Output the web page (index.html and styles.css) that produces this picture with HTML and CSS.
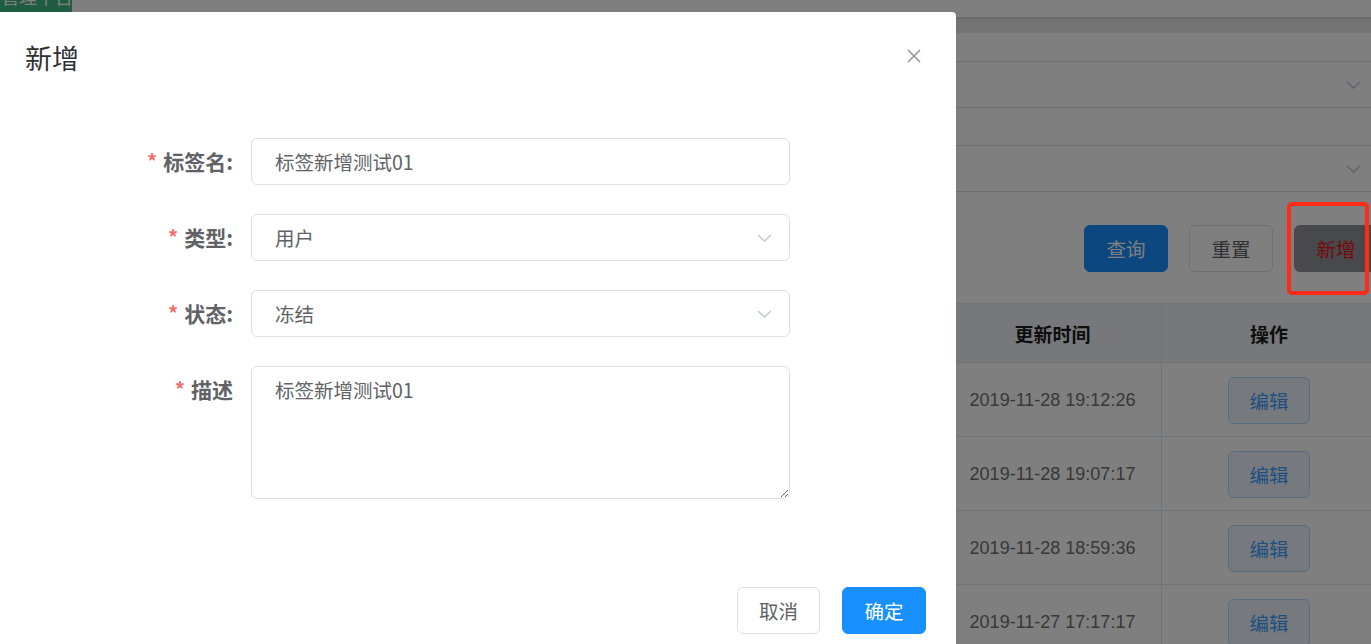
FILE: index.html
```html
<!DOCTYPE html>
<html lang="zh-CN">
<head>
<meta charset="utf-8">
<title>标签管理 - 新增</title>
<link rel="stylesheet" href="styles.css">
</head>
<body>
<div class="page">
  <div class="topbar">
    <div class="logo"><span class="logo-text">管理平台</span></div>
    <div class="navbar"></div>
  </div>
  <div class="tags"></div>
  <div class="content">
    <div class="filters">
      <div class="bg-select">
        <svg class="chev" width="15" height="8" viewBox="0 0 15 8"><path d="M1 1 L7.5 7 L14 1" fill="none" stroke="#c0c4cc" stroke-width="1.3"/></svg>
      </div>
      <div class="bg-select">
        <svg class="chev" width="15" height="8" viewBox="0 0 15 8"><path d="M1 1 L7.5 7 L14 1" fill="none" stroke="#c0c4cc" stroke-width="1.3"/></svg>
      </div>
      <div class="actions">
        <button class="btn btn-primary">查询</button>
        <button class="btn btn-default">重置</button>
        <button class="btn btn-info">新增</button>
      </div>
      <table class="grid">
        <colgroup><col class="c1"><col class="c2"><col class="c3"><col class="c4"></colgroup>
        <thead>
          <tr><th>状态</th><th>描述</th><th>更新时间</th><th>操作</th></tr>
        </thead>
        <tbody>
          <tr><td>正常</td><td>测试</td><td>2019-11-28 19:12:26</td><td><button class="edit">编辑</button></td></tr>
          <tr><td>正常</td><td>测试</td><td>2019-11-28 19:07:17</td><td><button class="edit">编辑</button></td></tr>
          <tr><td>冻结</td><td>测试</td><td>2019-11-28 18:59:36</td><td><button class="edit">编辑</button></td></tr>
          <tr><td>正常</td><td>测试</td><td>2019-11-27 17:17:17</td><td><button class="edit">编辑</button></td></tr>
        </tbody>
      </table>
    </div>
  </div>
</div>

<div class="mask"></div>

<div class="dialog">
  <div class="dialog-header">
    <span class="dialog-title">新增</span>
    <button class="dialog-close" aria-label="关闭">
      <svg width="14" height="14" viewBox="0 0 14 14"><path d="M1 1 L13 13 M13 1 L1 13" stroke="#909399" stroke-width="1.5" fill="none"/></svg>
    </button>
  </div>
  <div class="dialog-body">
    <div class="form">
      <div class="form-item">
        <label class="form-label"><span class="req">*</span>标签名:</label>
        <input class="input" value="标签新增测试01">
      </div>
      <div class="form-item">
        <label class="form-label"><span class="req">*</span>类型:</label>
        <div class="select">
          <span class="select-text">用户</span>
          <svg width="15" height="8" viewBox="0 0 15 8"><path d="M1 1 L7.5 7 L14 1" fill="none" stroke="#c0c4cc" stroke-width="1.3"/></svg>
        </div>
      </div>
      <div class="form-item">
        <label class="form-label"><span class="req">*</span>状态:</label>
        <div class="select">
          <span class="select-text">冻结</span>
          <svg width="15" height="8" viewBox="0 0 15 8"><path d="M1 1 L7.5 7 L14 1" fill="none" stroke="#c0c4cc" stroke-width="1.3"/></svg>
        </div>
      </div>
      <div class="form-item form-item-last">
        <label class="form-label"><span class="req">*</span>描述</label>
        <textarea class="textarea">标签新增测试01</textarea>
      </div>
    </div>
  </div>
  <div class="dialog-footer">
    <button class="dbtn dbtn-cancel">取消</button>
    <button class="dbtn dbtn-ok">确定</button>
  </div>
</div>

<div class="highlight"></div>
</body>
</html>
```
FILE: styles.css
```css
* { box-sizing: border-box; }
html, body { margin: 0; padding: 0; }
body {
  width: 1371px;
  height: 644px;
  overflow: hidden;
  position: relative;
  background: #fff;
  font-family: "Noto Sans CJK SC", "Liberation Sans", sans-serif;
  color: #606266;
}

/* ---------- underlying page ---------- */
.page { width: 1378px; }
.topbar { display: flex; height: 17px; }
.logo { width: 72px; height: 17px; background: #41b883; overflow: hidden; }
.logo-text {
  display: block;
  color: #fff;
  font-size: 18px;
  line-height: 18px;
  margin-top: -13px;
  padding-left: 1px;
  white-space: nowrap;
}
.navbar { flex: 1; background: #fff; }
.tags {
  height: 16px;
  background: #e6e6e6;
  box-shadow: inset 0 2px 2px rgba(0, 0, 0, 0.08);
}
.content { padding-top: 28px; }
.filters { margin-left: 600px; display: flex; flex-direction: column; }
.bg-select {
  height: 47px;
  border: 1px solid #dcdfe6;
  border-right: 0;
  display: flex;
  align-items: center;
  justify-content: flex-end;
  padding-right: 17px;
}
.bg-select + .bg-select { margin-top: 37px; }
.actions {
  margin-top: 33px;
  display: flex;
  justify-content: flex-end;
  gap: 21px;
}
.btn {
  width: 84px;
  height: 47px;
  border-radius: 6px;
  border: 1px solid transparent;
  padding: 0;
  font-family: "Noto Sans CJK SC", sans-serif;
  font-size: 19.5px;
}
.btn-primary { background: #1890ff; border-color: #1890ff; color: #fff; }
.btn-default { background: #fff; border-color: #dcdfe6; color: #606266; }
.btn-info { background: #909399; border-color: #909399; color: #e81414; }

.grid {
  margin-top: 31px;
  width: 776px;
  border-collapse: collapse;
  table-layout: fixed;
}
.grid .c1 { width: 128px; }
.grid .c2 { width: 215px; }
.grid .c3 { width: 218px; }
.grid .c4 { width: 215px; }
.grid th, .grid td {
  border: 1px solid #dfe6ec;
  text-align: center;
  padding: 0;
}
.grid th {
  height: 59px;
  background: #eef1f6;
  color: #1c1c1c;
  font-weight: bold;
  font-size: 19px;
}
.grid td {
  height: 74px;
  padding-top: 2px;
  font-family: "Liberation Sans", "Noto Sans CJK SC", sans-serif;
  font-size: 18px;
  color: #707070;
}
.edit {
  width: 82px;
  height: 47px;
  border: 1px solid #b3d8ff;
  background: #ecf5ff;
  color: #409eff;
  border-radius: 6px;
  padding: 0;
  font-family: "Noto Sans CJK SC", sans-serif;
  font-size: 19.5px;
}

/* ---------- overlay ---------- */
.mask {
  position: fixed;
  inset: 0;
  background: rgba(0, 0, 0, 0.5);
}

/* ---------- dialog ---------- */
.dialog {
  position: absolute;
  left: 0;
  top: 12px;
  width: 956px;
  height: 660px;
  background: #fff;
  border-radius: 0 4px 0 0;
}
.dialog-header {
  display: flex;
  justify-content: space-between;
  align-items: center;
  height: 64px;
  padding: 28px 35px 0 25px;
}
.dialog-title {
  font-size: 27px;
  line-height: 36px;
  color: #303133;
}
.dialog-close {
  border: 0;
  background: none;
  padding: 0;
  width: 14px;
  height: 14px;
  margin-top: -4px;
  display: flex;
}
.dialog-body { padding-top: 62px; }
.form { margin-left: 101px; width: 689px; }
.form-item { display: flex; margin-bottom: 29px; }
.form-item-last { margin-bottom: 0; }
.form-label {
  width: 150px;
  height: 47px;
  flex: none;
  display: flex;
  align-items: center;
  justify-content: flex-end;
  padding-right: 18px;
  font-size: 21px;
  font-weight: bold;
  line-height: 1;
  color: #606266;
  white-space: nowrap;
}
.req {
  color: #f56c6c;
  font-size: 20px;
  font-weight: bold;
  margin-right: 6px;
  align-self: flex-start;
  padding-top: 13px;
}
.input, .select, .textarea {
  flex: 1;
  border: 1px solid #dcdfe6;
  border-radius: 6px;
  background: #fff;
  color: #606266;
  font-family: "Noto Sans CJK SC", "Liberation Sans", sans-serif;
  font-size: 19.5px;
}
.input {
  height: 47px;
  padding: 0 23px;
  outline: none;
}
.select {
  height: 47px;
  display: flex;
  align-items: center;
  justify-content: space-between;
  padding: 0 17px 0 23px;
}
.textarea {
  height: 133px;
  padding: 8px 23px;
  line-height: 29px;
  resize: vertical;
  outline: none;
}
.dialog-footer {
  display: flex;
  justify-content: flex-end;
  gap: 22px;
  padding: 88px 30px 0 0;
}
.dbtn {
  width: 84px;
  height: 47px;
  border-radius: 6px;
  padding: 0;
  font-family: "Noto Sans CJK SC", sans-serif;
  font-size: 19.5px;
  border: 1px solid #dcdfe6;
}
.dbtn-cancel { width: 83px; background: #fff; color: #606266; }
.dbtn-ok { background: #1890ff; border-color: #1890ff; color: #fff; }

/* ---------- red annotation ---------- */
.highlight {
  position: absolute;
  left: 1287px;
  top: 202px;
  width: 82px;
  height: 93px;
  border: 4px solid #ff2a1a;
  border-radius: 5px;
}
```
